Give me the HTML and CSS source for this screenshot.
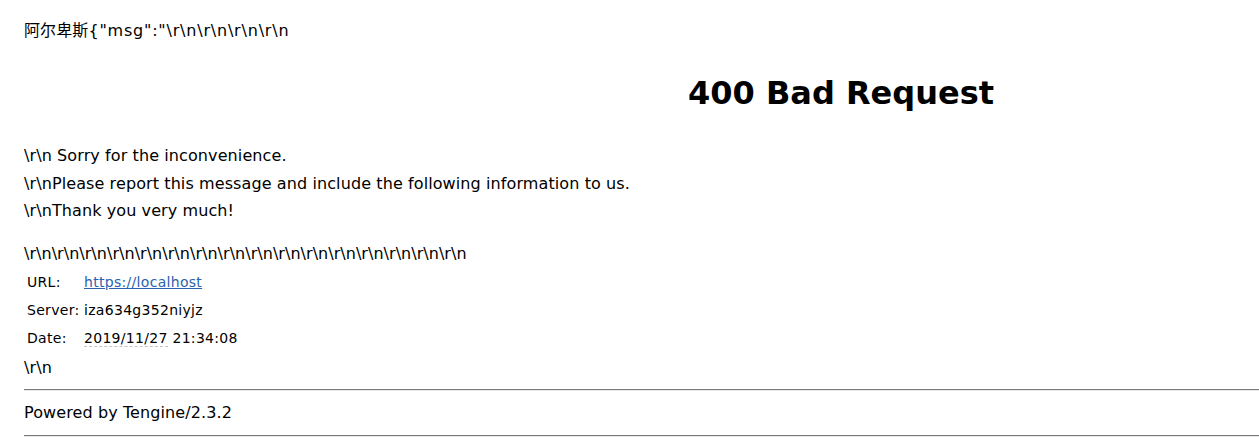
FILE: index.html
```html
<!DOCTYPE html>
<html>
<head>
<meta charset="utf-8">
<title>400 Bad Request</title>
<link rel="stylesheet" href="styles.css">
</head>
<body>
<div class="page">
  <div class="first">阿尔卑斯<span class="ascii">{"msg":"\r\n\r\n\r\n\r\n</span></div>
  <h1 class="title">400 Bad Request</h1>
  <div class="msg">
    <div class="line">\r\n Sorry for the inconvenience.</div>
    <div class="line">\r\nPlease report this message and include the following information to us.</div>
    <div class="line">\r\nThank you very much!</div>
  </div>
  <div class="rn">\r\n\r\n\r\n\r\n\r\n\r\n\r\n\r\n\r\n\r\n\r\n\r\n\r\n\r\n\r\n\r\n</div>
  <table class="info">
    <tr><td class="k">URL:</td><td><a class="link" href="#">https://localhost</a></td></tr>
    <tr><td class="k">Server:</td><td>iza634g352niyjz</td></tr>
    <tr><td class="k">Date:</td><td><span class="dt">2019/11/27</span> 21:34:08</td></tr>
  </table>
  <div class="rn2">\r\n</div>
  <hr class="rule">
  <div class="powered">Powered by Tengine/2.3.2</div>
  <hr class="rule last">
</div>
</body>
</html>
```
FILE: styles.css
```css
html, body {
  margin: 0;
  padding: 0;
  overflow: hidden;
  background: #fff;
}
body {
  font-family: "DejaVu Sans", "Noto Sans CJK SC", sans-serif;
  color: #000;
  font-size: 16px;
  letter-spacing: 0.1px;
}
.page {
  width: 1634px;
  padding-left: 24px;
  padding-top: 17px;
}
.first {
  line-height: 28px;
}
.ascii {
  letter-spacing: 0.8px;
}
.title {
  margin: 30px 0 0;
  text-align: center;
  font-size: 32px;
  font-weight: bold;
  line-height: 36px;
  letter-spacing: 0;
}
.msg {
  margin-top: 31px;
}
.line {
  line-height: 27.5px;
}
.rn {
  margin-top: 16px;
  line-height: 26px;
  letter-spacing: 0.04px;
}
.info {
  border-spacing: 2px;
  font-size: 14px;
  letter-spacing: 0.3px;
}
.info td {
  padding: 1px;
  height: 24px;
  line-height: 24px;
  vertical-align: middle;
}
.k {
  width: 53px;
}
.link {
  color: #2a62ad;
  text-decoration: underline;
}
.dt {
  border-bottom: 1px dashed #c4c4c4;
}
.rn2 {
  margin-top: 3px;
  line-height: 24px;
}
.rule {
  margin: 9px 0 0;
  border: 0;
  border-top: 1px solid #7a7a7a;
  border-bottom: 1px solid #e8e8e8;
  height: 0;
}
.powered {
  line-height: 44px;
}
.rule.last {
  margin-top: 0;
}
```
